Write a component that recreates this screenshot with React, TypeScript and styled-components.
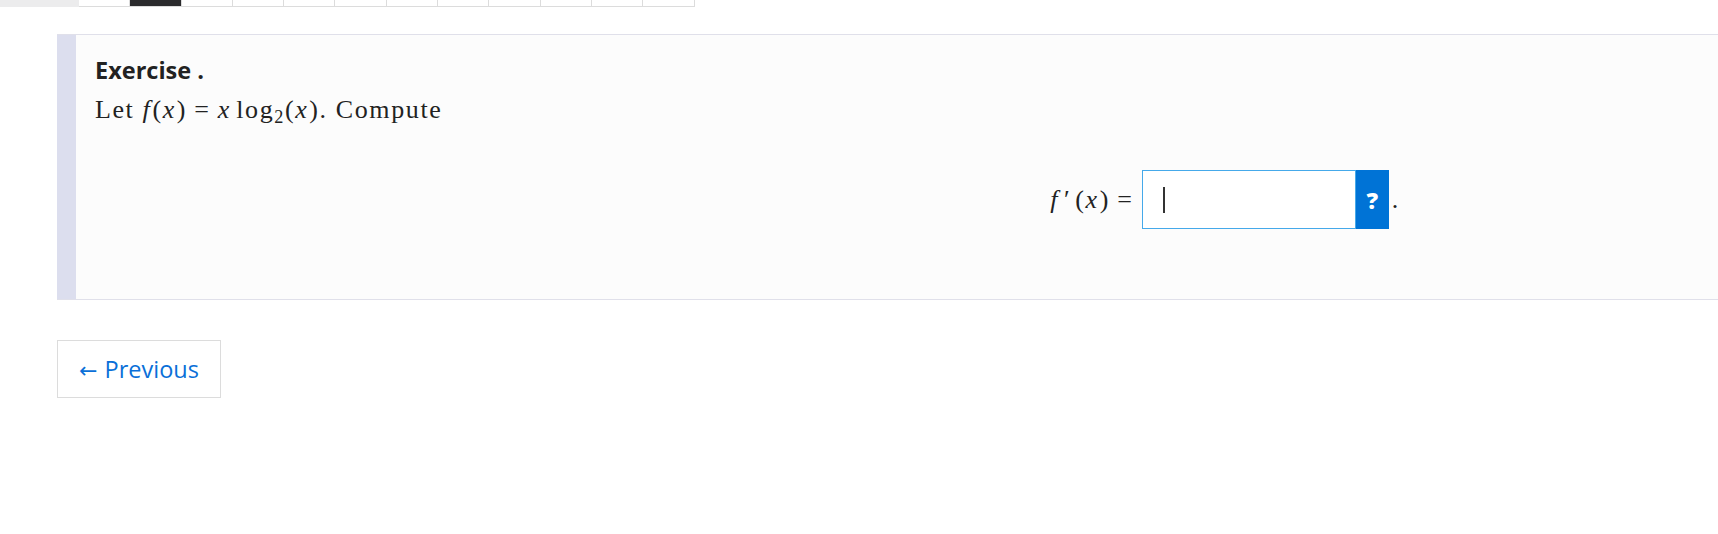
import React from 'react';
import styled, { createGlobalStyle } from 'styled-components';

const GlobalStyle = createGlobalStyle`
  html, body {
    margin: 0;
    padding: 0;
    background: #fff;
    overflow: hidden;
  }
  body {
    font-family: "Open Sans", "Noto Sans", sans-serif;
    color: #222;
  }
`;

const Page = styled.div`
  width: 1718px;
  height: 534px;
  overflow: hidden;
`;

const PagerStrip = styled.div`
  display: flex;
  height: 7px;
`;

const PagerLead = styled.div`
  width: 79px;
  background: #ececed;
`;

const PagerCell = styled.div<{ $active?: boolean }>`
  width: 51.3px;
  box-sizing: border-box;
  border-right: 1px solid #dcdcdc;
  border-bottom: 1px solid #dcdcdc;
  background: ${p => (p.$active ? '#2b2b2d' : '#fff')};
`;

const Main = styled.main`
  padding: 27px 0 0 57px;
`;

const ExerciseBox = styled.section`
  display: flex;
  width: 2317px;
  height: 266px;
  box-sizing: border-box;
  background: #fcfcfc;
  border-top: 1px solid #e0e0ea;
  border-bottom: 1px solid #e0e0ea;
`;

const Stripe = styled.div`
  width: 19px;
  flex-shrink: 0;
  background: #dcdeee;
`;

const ExerciseBody = styled.div`
  flex-grow: 1;
  padding: 17px 19px 0;
`;

const Heading = styled.div`
  font-weight: 700;
  font-size: 23.5px;
  line-height: 36px;
  color: #222;
`;

const MathText = styled.div`
  font-family: "Liberation Serif", "DejaVu Serif", serif;
  font-size: 26px;
  line-height: 44px;
  letter-spacing: 1.6px;
  color: #222;
`;

const V = styled.i`
  font-style: italic;
  margin-right: 1px;
`;

const Rel = styled.span`
  margin: 0 0.2778em;
`;

const Op = styled.span`
  margin-left: 0.1667em;
`;

const Sub = styled.sub`
  font-size: 0.7em;
  vertical-align: -0.25em;
  line-height: 0;
`;

const Display = styled.div`
  display: flex;
  justify-content: center;
  align-items: center;
  margin-top: 38px;
  font-family: "Liberation Serif", "DejaVu Serif", serif;
  font-size: 26px;
  letter-spacing: 1.6px;
  color: #222;
`;

const Prime = styled.span`
  font-style: normal;
  margin: 0 4px 0 4px;
`;

const AnswerField = styled.div`
  display: flex;
  align-items: center;
  width: 214px;
  height: 59px;
  box-sizing: border-box;
  margin-left: 1px;
  padding-left: 20px;
  background: #fff;
  border: 1px solid #45a9ea;
`;

const Caret = styled.span`
  width: 2px;
  height: 26px;
  background: #333;
`;

const HelpButton = styled.button`
  width: 33px;
  height: 59px;
  border: none;
  padding: 0;
  background: #0073d6;
  color: #fff;
  font-family: "Open Sans", "Noto Sans", sans-serif;
  font-weight: 800;
  font-size: 23px;
`;

const Period = styled.span`
  align-self: flex-end;
  margin: 0 0 14px 3px;
`;

const Nav = styled.nav`
  margin-top: 40px;
`;

const PrevButton = styled.a`
  display: inline-block;
  box-sizing: border-box;
  width: 164px;
  height: 58px;
  line-height: 56px;
  text-align: center;
  border: 1px solid #dcdcdc;
  color: #0a6fd8;
  font-size: 23.5px;
  text-decoration: none;
`;

const Arrow = styled.span`
  font-family: "DejaVu Sans", sans-serif;
  font-size: 22px;
  margin-right: 7px;
`;

function App() {
  const cells = Array.from({ length: 12 }, (_, i) => i);
  return (
    <Page>
      <GlobalStyle/>
      <PagerStrip>
        <PagerLead/>
        {cells.map(i => <PagerCell key={i} $active={i === 1}/>)}
      </PagerStrip>
      <Main>
        <ExerciseBox>
          <Stripe/>
          <ExerciseBody>
            <Heading>Exercise .</Heading>
            <MathText>
              Let <V>f</V>(<V>x</V>)<Rel>=</Rel><V>x</V><Op>log</Op><Sub>2</Sub>(<V>x</V>). Compute
            </MathText>
            <Display>
              <span><V>f</V><Prime>′</Prime>(<V>x</V>)<Rel>=</Rel></span>
              <AnswerField><Caret/></AnswerField>
              <HelpButton>?</HelpButton>
              <Period>.</Period>
            </Display>
          </ExerciseBody>
        </ExerciseBox>
        <Nav>
          <PrevButton href="#"><Arrow>←</Arrow>Previous</PrevButton>
        </Nav>
      </Main>
    </Page>
  );
}

export default App;
